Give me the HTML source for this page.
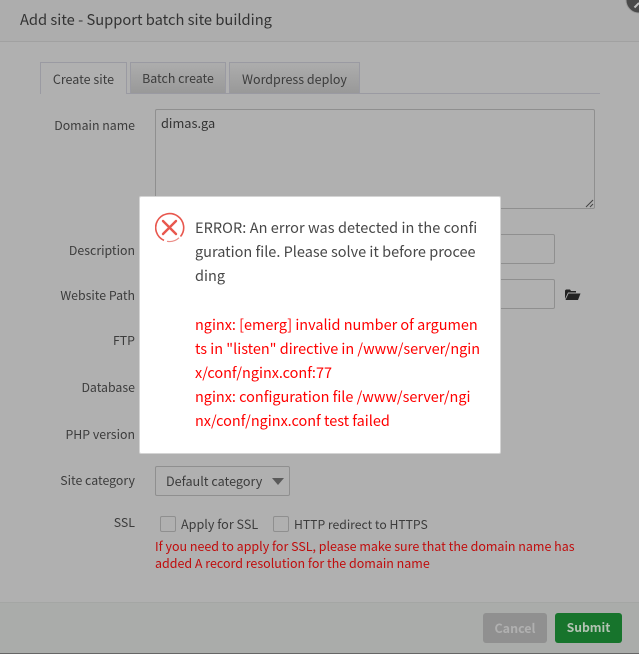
<!DOCTYPE html>
<html>
<head>
<meta charset="utf-8">
<style>
html,body{margin:0;padding:0;width:639px;height:654px;overflow:hidden;background:#b0b0b0;}
body{position:relative;font-family:"Noto Sans CJK SC","Liberation Sans",sans-serif;font-size:12.5px;color:#3c3c3c;}
.t{position:absolute;white-space:nowrap;line-height:20px;height:20px;}
.r{text-align:right;width:135px;left:0;font-size:12.35px;}
.box{position:absolute;box-sizing:border-box;border:1px solid #8f8f8f;border-radius:2px;}
.tab{position:absolute;box-sizing:border-box;top:62px;height:31px;border:1px solid #9a9aa2;border-bottom:0;background:linear-gradient(#adadad,#999);text-align:center;line-height:31px;font-size:12.5px;color:#3c3c3c;}
.e{position:absolute;left:195px;white-space:nowrap;font-size:14.5px;line-height:24px;height:24px;color:#484848;}
.red{color:#f00;font-size:14.45px;}
</style>
</head>
<body>
<div style="position:absolute;left:0;top:0;width:639px;height:42px;background:#adadad;border-bottom:1px solid #a1a1a1;box-sizing:border-box;"></div>
<div class="t" style="left:20px;top:10px;font-size:14.7px;color:#333;">Add site - Support batch site building</div>
<svg style="position:absolute;left:620px;top:0;" width="19" height="16" viewBox="0 0 19 16"><circle cx="19" cy="0" r="13" fill="#4a4a4a" stroke="#999" stroke-width="1"/><path d="M14.500 7.500L19 3" stroke="#c4c4c4" stroke-width="2"/></svg>

<div style="position:absolute;left:40px;top:93px;width:560px;height:1px;background:#9a9aa2;"></div>
<div class="tab" style="left:40px;width:87px;background:#b0b0b0;height:32px;">Create site</div>
<div class="tab" style="left:130px;width:96px;font-size:12.4px;">Batch create</div>
<div class="tab" style="left:229px;width:131px;">Wordpress deploy</div>

<div class="t r" style="top:115px;">Domain name</div>
<div class="box" style="left:155px;top:109px;width:440px;height:100px;"></div>
<div class="t" style="left:161px;top:113px;color:#333;font-size:12.8px;">dimas.ga</div>
<svg style="position:absolute;left:585px;top:199px;" width="9" height="9"><path d="M1 8L8 1M5 8L8 5" stroke="#444" stroke-width="1" fill="none"/></svg>

<div class="t r" style="top:240px;">Description</div>
<div class="box" style="left:155px;top:234px;width:400px;height:30px;"></div>
<div class="t r" style="top:285px;">Website Path</div>
<div class="box" style="left:155px;top:279px;width:400px;height:30px;"></div>
<svg style="position:absolute;left:564px;top:288px;" width="17" height="13" viewBox="0 0 17 13"><path d="M1 11V2.500L2 1.500H6L7 3H12V4.500H4L1 11Z" fill="#222"/><path d="M4.500 5.500H16.500L14 12H1.500Z" fill="#222"/></svg>
<div class="t r" style="top:330px;">FTP</div>
<div class="t r" style="top:377px;">Database</div>
<div class="t r" style="top:424px;">PHP version</div>

<div class="t r" style="top:470px;">Site category</div>
<div class="box" style="left:155px;top:466px;width:135px;height:30px;"></div>
<div class="t" style="left:166px;top:471px;font-size:12.6px;">Default category</div>
<svg style="position:absolute;left:272px;top:478px;" width="12" height="7"><path d="M0 0H12L6 7Z" fill="#5a5a5a"/></svg>

<div class="t r" style="top:512px;">SSL</div>
<div class="box" style="left:160px;top:516px;width:16px;height:16px;"></div>
<div class="t" style="left:181px;top:514px;font-size:12.6px;">Apply for SSL</div>
<div class="box" style="left:273px;top:516px;width:16px;height:16px;"></div>
<div class="t" style="left:294px;top:514px;font-size:12.2px;">HTTP redirect to HTTPS</div>
<div class="t" style="left:155px;top:538px;font-size:12.47px;line-height:17px;height:17px;color:#c00d0d;">If you need to apply for SSL, please make sure that the domain name has</div>
<div class="t" style="left:155px;top:555px;font-size:12.47px;line-height:17px;height:17px;color:#c00d0d;">added A record resolution for the domain name</div>

<div style="position:absolute;left:0;top:602px;width:639px;height:51px;background:#aaacaa;border-top:1px solid #a4a6a4;box-sizing:border-box;"></div>
<div style="position:absolute;left:0;top:653px;width:639px;height:1px;background:#666;"></div>
<div style="position:absolute;left:483px;top:613px;width:64px;height:30px;background:#909090;border-radius:3px;text-align:center;line-height:29px;font-weight:700;font-size:12.5px;color:#b0b0b0;">Cancel</div>
<div style="position:absolute;left:555px;top:613px;width:67px;height:30px;background:#17742c;border-radius:3px;text-align:center;line-height:29px;font-weight:700;font-size:12.2px;color:#b4c4b4;">Submit</div>

<div style="position:absolute;left:139px;top:196px;width:362px;height:258px;background:#fff;border:1px solid #d4d4d4;box-sizing:border-box;border-radius:2px;"></div>
<svg style="position:absolute;left:155px;top:212px;" width="31" height="31" viewBox="0 0 31 31">
<path d="M9 28.400A14 14 0 1 1 25.500 24.500" fill="none" stroke="#e8574e" stroke-width="1.600"/>
<path d="M24 25.800A14 14 0 0 1 12 29.300" fill="none" stroke="#eb8d87" stroke-width="1.200"/>
<path d="M8 9L21 22M21 9L8 22" stroke="#e8574e" stroke-width="2.400" stroke-linecap="round"/>
</svg>
<div class="e" style="top:216px;letter-spacing:0.07px;">ERROR: An error was detected in the confi</div>
<div class="e" style="top:240px;">guration file. Please solve it before procee</div>
<div class="e" style="top:264px;">ding</div>
<div class="e red" style="top:313px;">nginx: [emerg] invalid number of argumen</div>
<div class="e red" style="top:337px;">ts in "listen" directive in /www/server/ngin</div>
<div class="e red" style="top:361px;">x/conf/nginx.conf:77</div>
<div class="e red" style="top:385px;">nginx: configuration file /www/server/ngi</div>
<div class="e red" style="top:409px;">nx/conf/nginx.conf test failed</div>
</body>
</html>
